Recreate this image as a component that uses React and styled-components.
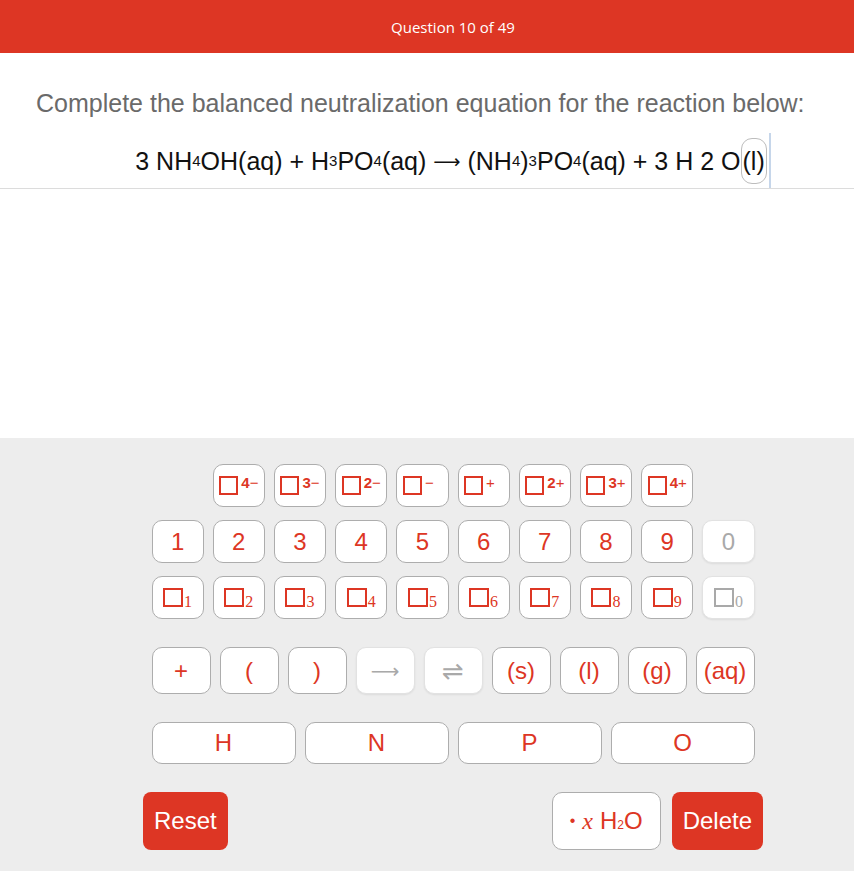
import React from 'react';
import styled, { createGlobalStyle } from 'styled-components';

const RED = '#dd3624';

const GlobalStyle = createGlobalStyle`
  html, body {
    margin: 0;
    padding: 0;
    background: #fff;
  }
  body {
    font-family: "Liberation Sans", Arial, sans-serif;
  }
  * {
    box-sizing: border-box;
  }
`;

const charges = [
  ['4', '−'], ['3', '−'], ['2', '−'], ['', '−'],
  ['', '+'], ['2', '+'], ['3', '+'], ['4', '+'],
];
const digits = ['1', '2', '3', '4', '5', '6', '7', '8', '9', '0'];
const symbols = [
  { label: '+' }, { label: '(' }, { label: ')' },
  { label: '⟶', off: true, arrow: 20 }, { label: '⇌', off: true, arrow: 26 },
  { label: '(s)' }, { label: '(l)' }, { label: '(g)' }, { label: '(aq)' },
];
const elements = ['H', 'N', 'P', 'O'];

function App() {
  return (
    <Page>
      <GlobalStyle />
      <Header>Question 10 of 49</Header>

      <Workspace>
        <Prompt>Complete the balanced neutralization equation for the reaction below:</Prompt>
        <EquationRow>
          <Equation>
            3 NH<Sub>4</Sub>OH(aq) + H<Sub>3</Sub>PO<Sub>4</Sub>(aq) <Arrow>⟶</Arrow> (NH<Sub>4</Sub>)<Sub>3</Sub>PO<Sub>4</Sub>(aq) + 3 H 2 O
            <Selected>(l)</Selected>
            <Caret />
          </Equation>
        </EquationRow>
      </Workspace>

      <Keyboard>
        <KeyGrid $cols={10}>
          {charges.map(([n, s], i) => (
            <Key key={i} $start={i === 0 ? 2 : undefined}>
              <ChargeLabel>
                <Square />
                <Sup>
                  <b>{n}</b>
                  {s}
                </Sup>
              </ChargeLabel>
            </Key>
          ))}
        </KeyGrid>

        <KeyGrid $cols={10}>
          {digits.map((d) => (
            <Key key={d} $off={d === '0'}>{d}</Key>
          ))}
        </KeyGrid>

        <KeyGrid $cols={10}>
          {digits.map((d) => (
            <Key key={d} $off={d === '0'}>
              <SubLabel>
                <Square $w={20} />
                <SubDigit>{d}</SubDigit>
              </SubLabel>
            </Key>
          ))}
        </KeyGrid>

        <KeyGrid $cols={9} $gapTop={28}>
          {symbols.map((s) => (
            <Key key={s.label} $h={47} $off={s.off} $arrow={s.arrow}>{s.label}</Key>
          ))}
        </KeyGrid>

        <KeyGrid $cols={4} $gapTop={28}>
          {elements.map((e) => (
            <Key key={e} $h={42}>{e}</Key>
          ))}
        </KeyGrid>

        <ActionRow>
          <RedButton>Reset</RedButton>
          <Spacer />
          <HydrateKey>
            <Dot>•</Dot>
            <ItalicX>x</ItalicX>
            <span>
              H<SmallSub>2</SmallSub>O
            </span>
          </HydrateKey>
          <RedButton>Delete</RedButton>
        </ActionRow>
      </Keyboard>
    </Page>
  );
}

export default App;

const Page = styled.div`
  min-height: 100vh;
  display: flex;
  flex-direction: column;
`;

const Header = styled.header`
  height: 53px;
  background: ${RED};
  color: #fff;
  display: flex;
  align-items: center;
  justify-content: center;
  padding-left: 52px;
  font-family: "Open Sans", "Liberation Sans", sans-serif;
  font-size: 15px;
`;

const Workspace = styled.div`
  flex: 1;
  background: #fff;
`;

const Prompt = styled.p`
  margin: 0;
  padding: 36px 36px 0;
  font-size: 25px;
  line-height: 28px;
  color: #6a6a6a;
  white-space: nowrap;
`;

const EquationRow = styled.div`
  padding: 16px 0 0 52px;
  display: flex;
  justify-content: center;
  border-bottom: 1px solid #dcdcdc;
`;

const Equation = styled.div`
  height: 55px;
  display: flex;
  align-items: center;
  font-size: 25px;
  line-height: 28px;
  color: #111;
  white-space: pre;
`;

const Sub = styled.span`
  font-size: 15px;
`;

const Arrow = styled.span`
  font-family: "DejaVu Sans", sans-serif;
  font-size: 19px;
`;

const Selected = styled.span`
  height: 46px;
  display: inline-flex;
  align-items: center;
  padding: 0 1px;
  border: 1px solid #bdbdbd;
  border-radius: 11px;
`;

const Caret = styled.span`
  width: 2px;
  height: 55px;
  margin-left: 2px;
  background: #c6d6ea;
`;

const Keyboard = styled.section`
  background: #ededed;
  padding: 26px 0 21px 52px;
  display: flex;
  flex-direction: column;
  align-items: center;
`;

const KeyGrid = styled.div`
  width: 603px;
  display: grid;
  grid-template-columns: repeat(${(p) => p.$cols}, 1fr);
  column-gap: 9px;
  margin-top: ${(p) => p.$gapTop || 13}px;
  &:first-child {
    margin-top: 0;
  }
`;

const Key = styled.button`
  grid-column-start: ${(p) => p.$start || 'auto'};
  height: ${(p) => p.$h || 43}px;
  padding: 0;
  background: #fff;
  border: 1px solid ${(p) => (p.$off ? '#e2e2e2' : '#adadad')};
  border-radius: 10px;
  box-shadow: ${(p) => (p.$off ? '0 1px 2px rgba(0, 0, 0, 0.08)' : 'none')};
  color: ${(p) => (p.$off ? '#a9a9a9' : RED)};
  font-family: ${(p) => (p.$arrow ? '"DejaVu Sans", sans-serif' : '"Liberation Sans", Arial, sans-serif')};
  font-size: ${(p) => p.$arrow || 24}px;
  display: flex;
  align-items: center;
  justify-content: center;
  cursor: pointer;
`;

const ChargeLabel = styled.span`
  display: flex;
  align-items: flex-start;
  margin-left: 2px;
`;

const Square = styled.span`
  display: inline-block;
  width: ${(p) => p.$w || 19}px;
  height: 19px;
  border: 2px solid currentColor;
`;

const Sup = styled.span`
  margin-left: 3px;
  font-size: 15px;
  line-height: 1;
  margin-top: -1px;
  min-width: 19px;
  text-align: left;
  b {
    font-weight: 700;
  }
`;

const SubLabel = styled.span`
  display: flex;
  align-items: flex-end;
`;

const SubDigit = styled.span`
  font-family: "Liberation Serif", "Times New Roman", serif;
  font-size: 16px;
  line-height: 1;
  margin-left: 1px;
  margin-bottom: -3px;
`;

const ActionRow = styled.div`
  width: 620px;
  height: 58px;
  margin-top: 28px;
  display: flex;
  align-items: center;
  gap: 11px;
`;

const Spacer = styled.div`
  flex: 1;
`;

const RedButton = styled.button`
  height: 58px;
  padding: 0 11px;
  border: none;
  border-radius: 8px;
  background: ${RED};
  color: #fff;
  font-family: "Liberation Sans", Arial, sans-serif;
  font-size: 24px;
  cursor: pointer;
`;

const HydrateKey = styled.button`
  width: 109px;
  height: 58px;
  padding: 0;
  background: #fff;
  border: 1px solid #adadad;
  border-radius: 10px;
  color: ${RED};
  font-family: "Liberation Sans", Arial, sans-serif;
  font-size: 24px;
  display: flex;
  align-items: center;
  justify-content: center;
  gap: 7px;
  cursor: pointer;
`;

const Dot = styled.span`
  font-size: 16px;
`;

const ItalicX = styled.span`
  font-family: "Liberation Serif", "Times New Roman", serif;
  font-style: italic;
  font-size: 24px;
`;

const SmallSub = styled.span`
  font-size: 12px;
`;
